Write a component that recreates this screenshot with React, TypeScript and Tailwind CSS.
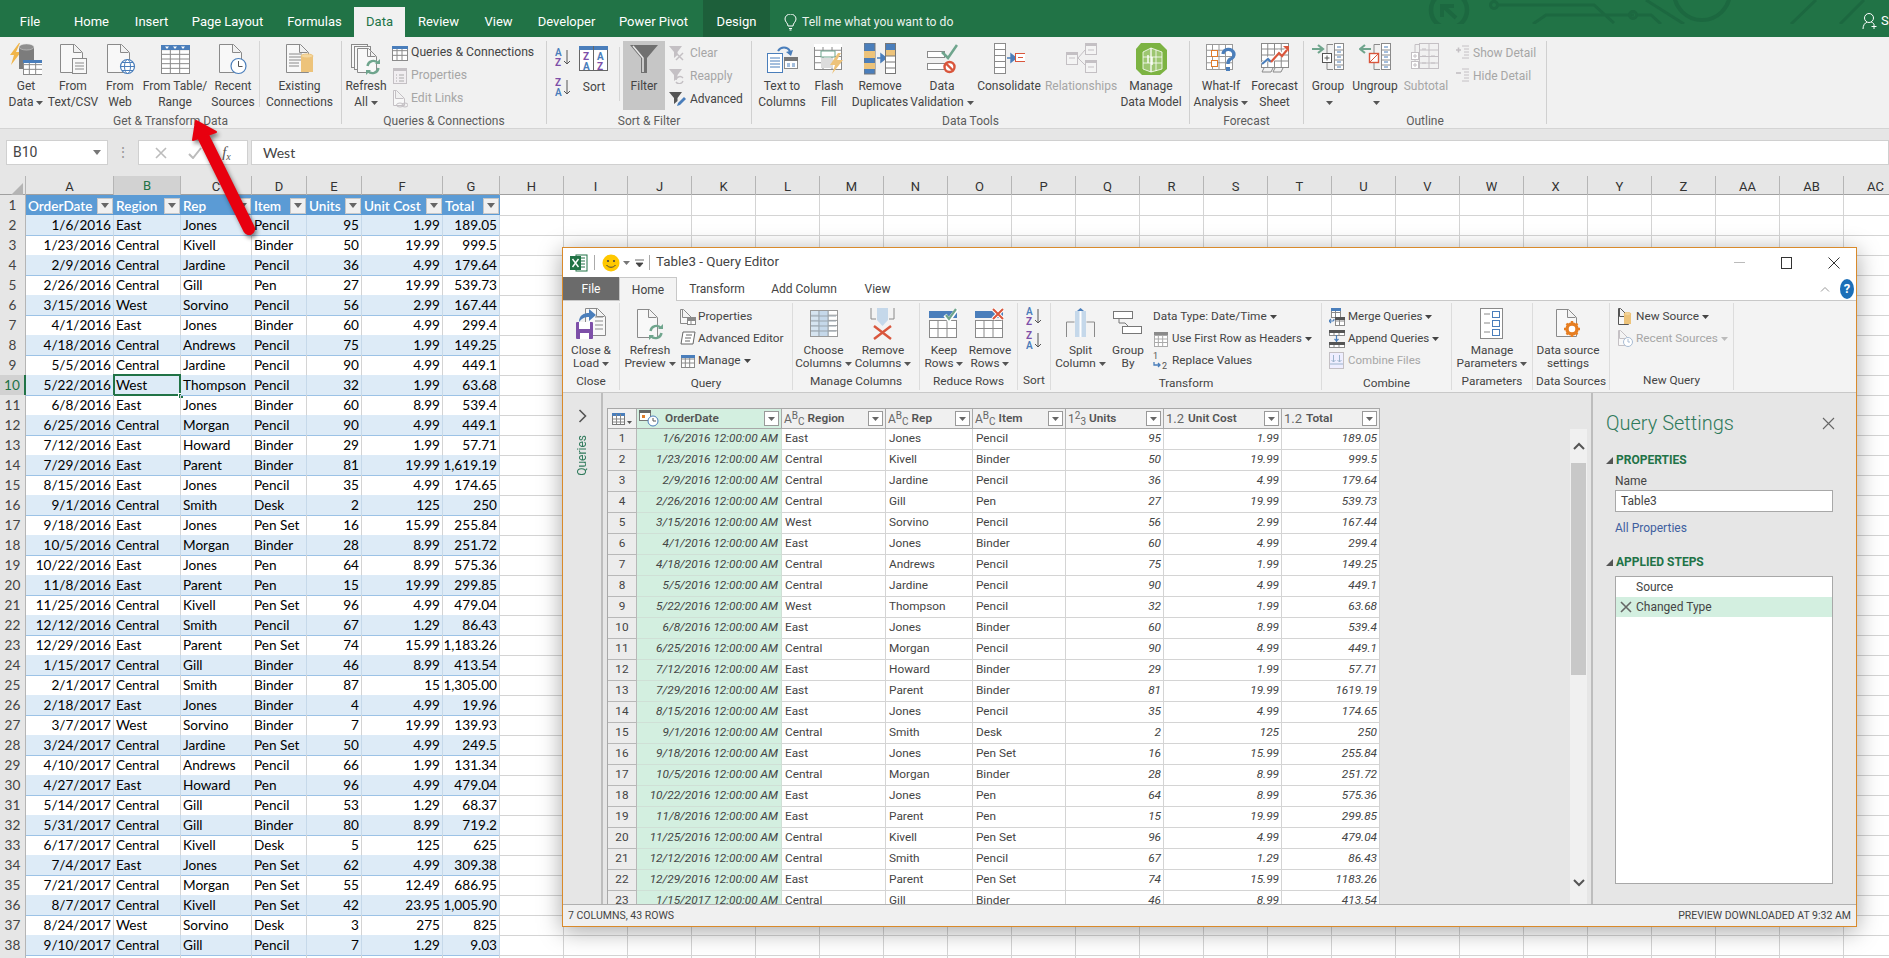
import type { ReactNode } from "react";

const GR = "#8a8a8a";
const DIS = "#c4c0c4";
const BL = "#4a7ebb";
const OR = "#edc37a";
const RD = "#d9563c";
const TL = "#6fa58d";
const PU = "#7d4fa8";

const rows: string[][] = [
  ["1/6/2016", "East", "Jones", "Pencil", "95", "1.99", "189.05"],
  ["1/23/2016", "Central", "Kivell", "Binder", "50", "19.99", "999.5"],
  ["2/9/2016", "Central", "Jardine", "Pencil", "36", "4.99", "179.64"],
  ["2/26/2016", "Central", "Gill", "Pen", "27", "19.99", "539.73"],
  ["3/15/2016", "West", "Sorvino", "Pencil", "56", "2.99", "167.44"],
  ["4/1/2016", "East", "Jones", "Binder", "60", "4.99", "299.4"],
  ["4/18/2016", "Central", "Andrews", "Pencil", "75", "1.99", "149.25"],
  ["5/5/2016", "Central", "Jardine", "Pencil", "90", "4.99", "449.1"],
  ["5/22/2016", "West", "Thompson", "Pencil", "32", "1.99", "63.68"],
  ["6/8/2016", "East", "Jones", "Binder", "60", "8.99", "539.4"],
  ["6/25/2016", "Central", "Morgan", "Pencil", "90", "4.99", "449.1"],
  ["7/12/2016", "East", "Howard", "Binder", "29", "1.99", "57.71"],
  ["7/29/2016", "East", "Parent", "Binder", "81", "19.99", "1,619.19"],
  ["8/15/2016", "East", "Jones", "Pencil", "35", "4.99", "174.65"],
  ["9/1/2016", "Central", "Smith", "Desk", "2", "125", "250"],
  ["9/18/2016", "East", "Jones", "Pen Set", "16", "15.99", "255.84"],
  ["10/5/2016", "Central", "Morgan", "Binder", "28", "8.99", "251.72"],
  ["10/22/2016", "East", "Jones", "Pen", "64", "8.99", "575.36"],
  ["11/8/2016", "East", "Parent", "Pen", "15", "19.99", "299.85"],
  ["11/25/2016", "Central", "Kivell", "Pen Set", "96", "4.99", "479.04"],
  ["12/12/2016", "Central", "Smith", "Pencil", "67", "1.29", "86.43"],
  ["12/29/2016", "East", "Parent", "Pen Set", "74", "15.99", "1,183.26"],
  ["1/15/2017", "Central", "Gill", "Binder", "46", "8.99", "413.54"],
  ["2/1/2017", "Central", "Smith", "Binder", "87", "15", "1,305.00"],
  ["2/18/2017", "East", "Jones", "Binder", "4", "4.99", "19.96"],
  ["3/7/2017", "West", "Sorvino", "Binder", "7", "19.99", "139.93"],
  ["3/24/2017", "Central", "Jardine", "Pen Set", "50", "4.99", "249.5"],
  ["4/10/2017", "Central", "Andrews", "Pencil", "66", "1.99", "131.34"],
  ["4/27/2017", "East", "Howard", "Pen", "96", "4.99", "479.04"],
  ["5/14/2017", "Central", "Gill", "Pencil", "53", "1.29", "68.37"],
  ["5/31/2017", "Central", "Gill", "Binder", "80", "8.99", "719.2"],
  ["6/17/2017", "Central", "Kivell", "Desk", "5", "125", "625"],
  ["7/4/2017", "East", "Jones", "Pen Set", "62", "4.99", "309.38"],
  ["7/21/2017", "Central", "Morgan", "Pen Set", "55", "12.49", "686.95"],
  ["8/7/2017", "Central", "Kivell", "Pen Set", "42", "23.95", "1,005.90"],
  ["8/24/2017", "West", "Sorvino", "Desk", "3", "275", "825"],
  ["9/10/2017", "Central", "Gill", "Pencil", "7", "1.29", "9.03"],
];

const sheetHeads = ["OrderDate", "Region", "Rep", "Item", "Units", "Unit Cost", "Total"];
const colLetters = "A B C D E F G H I J K L M N O P Q R S T U V W X Y Z AA AB AC".split(" ");
const rightAligned = [true, false, false, false, true, true, true];
const SHEET_COLS = "grid grid-cols-[26px_88px_67px_71px_55px_55px_81px_57px_repeat(22,64px)]";
const QE_COLS = "grid grid-cols-[29px_145px_104px_87px_93px_98px_118px_98px]";

function Ico({ w = 32, h = 32, children }: { w?: number; h?: number; children: ReactNode }) {
  return (
    <svg width={w} height={h} viewBox={`0 0 ${w} ${h}`} fill="none" className="shrink-0">
      {children}
    </svg>
  );
}

const Caret = ({ color = "#555" }: { color?: string }) => (
  <svg width="7" height="4" viewBox="0 0 7 4" className="inline-block ml-[3px] align-middle">
    <path d="M0 0h7L3.5 4z" fill={color} />
  </svg>
);

// folded page outline used by lots of the ribbon icons
const Doc = ({ x = 0, y = 0, w = 22, h = 28, c = GR }: { x?: number; y?: number; w?: number; h?: number; c?: string }) => (
  <path
    d={`M${x + 0.5} ${y + 0.5}h${w - 8}l8 8v${h - 8}h-${w}zM${x + w - 8.5} ${y + 0.5}v8h8`}
    fill="#f8f8f8"
    stroke={c}
  />
);

const MiniTable = ({ x, y, w, h, c = GR, cols = 3, rws = 3, top = BL }: { x: number; y: number; w: number; h: number; c?: string; cols?: number; rws?: number; top?: string }) => {
  const lines = [];
  for (let i = 1; i < cols; i++) {
    const px = x + (w * i) / cols;
    lines.push(<path key={"c" + i} d={`M${px} ${y}v${h}`} stroke={c} />);
  }
  for (let i = 1; i < rws; i++) {
    const py = y + (h * i) / rws;
    lines.push(<path key={"r" + i} d={`M${x} ${py}h${w}`} stroke={c} />);
  }
  return (
    <g>
      <rect x={x + 0.5} y={y + 0.5} width={w} height={h} fill="#fff" stroke={c} />
      {lines}
      <rect x={x} y={y} width={w + 1} height={3} fill={top} />
    </g>
  );
};

const Arrows = ({ x, y, c = TL }: { x: number; y: number; c?: string }) => (
  <g transform={`translate(${x} ${y})`} stroke={c} strokeWidth="2.4" fill="none">
    <path d="M1.5 6A6 6 0 0 1 12 3" />
    <path d="M12.5 8A6 6 0 0 1 2 11" />
    <path d="M9 4h5V-1z" fill={c} stroke="none" />
    <path d="M5 10H0v5z" fill={c} stroke="none" />
  </g>
);

const Funnel = ({ c }: { c: string }) => <path d="M1 1h13L9.5 7v3L6 13V7z" fill={c} />;

const AZ = ({ a, b }: { a: string; b: string }) => (
  <svg width="16" height="20" viewBox="0 0 16 20">
    <text x="0" y="9" fontSize="10" fontWeight="600" fontFamily="Roboto,sans-serif" fill={a === "A" ? BL : PU}>{a}</text>
    <text x="0" y="19" fontSize="10" fontWeight="600" fontFamily="Roboto,sans-serif" fill={b === "A" ? BL : PU}>{b}</text>
    <path d="M12 3v14M9 14l3 3 3-3" stroke="#555" fill="none" />
  </svg>
);

const icons: Record<string, ReactNode> = {
  getData: (
    <Ico>
      <path d="M9 0 0 12h4L1 22l10-13H6l4-9z" fill="#f0b54a" />
      <rect x="9" y="4" width="15" height="22" fill="#7c7c7c" />
      <ellipse cx="16.5" cy="4" rx="7.5" ry="3" fill="#8f8f8f" stroke="#ddd" strokeWidth=".5" />
      <MiniTable x={13} y={17} w={19} h={14} />
    </Ico>
  ),
  fromText: (
    <Ico>
      <Doc x={3} y={1} />
      <rect x="15.5" y="15.5" width="14" height="15" fill="#f8f8f8" stroke={GR} />
      <path d="M18 20h9M18 23h9M18 26h9" stroke={GR} />
    </Ico>
  ),
  fromWeb: (
    <Ico>
      <Doc x={3} y={1} />
      <circle cx="23.5" cy="23.5" r="7" fill="#fff" stroke={BL} strokeWidth="1.2" />
      <ellipse cx="23.5" cy="23.5" rx="3" ry="7" stroke={BL} />
      <path d="M16.5 23.5h14M18 19.5h11M18 27.5h11" stroke={BL} />
    </Ico>
  ),
  fromTable: (
    <Ico>
      <MiniTable x={2} y={2} w={28} h={28} cols={3} rws={6} />
      <rect x="2" y="2" width="29" height="5" fill={BL} />
      <path d="M6 3.5h4L8 6zM14 3.5h4L16 6zM22 3.5h4L24 6z" fill="#fff" />
    </Ico>
  ),
  recent: (
    <Ico>
      <Doc x={2} y={1} />
      <circle cx="21.5" cy="23" r="7.5" fill="#fff" stroke={BL} strokeWidth="1.2" />
      <path d="M21.5 18v5.5h4" stroke="#555" />
    </Ico>
  ),
  existing: (
    <Ico>
      <Doc x={2} y={1} />
      <path d="M5 11h13M5 14h13M5 17h13M5 20h10M5 23h10" stroke={GR} />
      <rect x="17" y="13" width="12" height="16" fill={OR} />
      <ellipse cx="23" cy="13" rx="6" ry="2" fill="#f4d79f" stroke={OR} />
    </Ico>
  ),
  refresh: (
    <Ico>
      <rect x="1.5" y="1.5" width="16" height="23" fill="#f8f8f8" stroke={GR} />
      <rect x="4.5" y="3.5" width="16" height="23" fill="#f8f8f8" stroke={GR} />
      <Doc x={7} y={5} w={19} h={24} />
      <Arrows x={16} y={17} />
    </Ico>
  ),
  textCols: (
    <Ico>
      <path d="M12 8a7 7 0 0 1 12 0" stroke={BL} strokeWidth="2" />
      <path d="M20 9l5 4 2-6z" fill={BL} />
      <rect x="1.5" y="10.5" width="15" height="19" fill="#fff" stroke={BL} />
      <path d="M4 15h10M4 18h10M4 21h10M4 24h10" stroke={BL} />
      <rect x="18.5" y="14.5" width="13" height="11" fill="#fff" stroke={GR} />
      <rect x="18" y="14" width="14" height="4" fill="#777" />
      <path d="M21 21h3M26 21h3M21 23h3M26 23h3" stroke={BL} />
    </Ico>
  ),
  flash: (
    <Ico>
      <MiniTable x={1} y={1} w={27} h={25} cols={3} rws={4} top="#fff" />
      <rect x="8" y="8" width="14" height="6" fill="#fff" stroke={TL} />
      <rect x="8" y="15" width="12" height="10" fill="#dcdcdc" />
      <path d="M25 10 17 22h5l-3 9 11-14h-6l4-7z" fill={OR} />
    </Ico>
  ),
  dups: (
    <Ico>
      <rect x="0" y="0" width="11" height="31" fill={BL} stroke="#777" />
      <rect x="0" y="8" width="11" height="7" fill={OR} />
      <rect x="0" y="20" width="11" height="6" fill={OR} />
      <path d="M13 15h7M17 11l5 4-5 4z" stroke={BL} fill={BL} strokeWidth="1.5" />
      <rect x="21.5" y=".5" width="10" height="30" fill="#fff" stroke="#777" />
      <rect x="22" y="1" width="9" height="6" fill={BL} />
      <rect x="22" y="7" width="9" height="6" fill={OR} />
      <path d="M22 13h9M22 19h9M22 25h9" stroke="#777" />
    </Ico>
  ),
  validation: (
    <Ico>
      <rect x="1.5" y="8.5" width="17" height="6" fill="#fff" stroke={GR} />
      <rect x="1.5" y="20.5" width="17" height="6" fill="#fff" stroke={GR} />
      <path d="M16 9l6 6L31 2" stroke={TL} strokeWidth="2.6" />
      <circle cx="23.5" cy="24" r="5" fill="#fff" stroke={RD} strokeWidth="2.4" />
      <path d="M20 20.5l7 7" stroke={RD} strokeWidth="2.4" />
    </Ico>
  ),
  consolidate: (
    <Ico>
      <rect x="1.5" y=".5" width="11" height="30" fill="#fff" stroke={GR} />
      <path d="M2 6.5h10M2 12.5h10M2 18.5h10M2 24.5h10" stroke={GR} />
      <path d="M14 15h7M18 11l5 4-5 4z" stroke={BL} fill={BL} strokeWidth="1.4" />
      <rect x="22.5" y="10.5" width="10" height="8" fill="#fff" stroke={RD} />
      <path d="M25 14.5h5" stroke={RD} />
    </Ico>
  ),
  relationships: (
    <Ico>
      <rect x="1.5" y="9.5" width="11" height="12" fill="#f4f4f4" stroke={DIS} />
      <rect x="1" y="9" width="12" height="3" fill={DIS} />
      <rect x="20.5" y=".5" width="11" height="11" fill="#f4f4f4" stroke={DIS} />
      <rect x="20" y="0" width="12" height="3" fill={DIS} />
      <rect x="20.5" y="17.5" width="11" height="12" fill="#f4f4f4" stroke={DIS} />
      <rect x="20" y="17" width="12" height="3" fill={DIS} />
      <path d="M13 15 20 7M13 15l7 7M4 15h6M23 7h6M23 24h6" stroke={DIS} />
    </Ico>
  ),
  dataModel: (
    <Ico>
      <path d="M6 0h19l7 7v19l-7 6H7l-6-6V6z" fill="#7cb342" />
      <path d="M8 9l8-4v24l-8-3zM16 5l11 4v17l-11 3z" fill="#fff" fillOpacity=".25" stroke="#fff" strokeWidth=".8" />
      <path d="M8 14h19M8 20h19M21 7v21" stroke="#fff" strokeWidth=".8" />
      <path d="M13 12v8M17 14v8" stroke="#fff" strokeWidth="1.4" />
    </Ico>
  ),
  whatIf: (
    <Ico>
      <MiniTable x={1} y={1} w={26} h={25} cols={4} rws={4} top="#ffffff00" c="#999" />
      <rect x="6.5" y="7.5" width="6" height="6" fill="#fff" stroke="#e07b2a" />
      <rect x="6.5" y="17.5" width="6" height="6" fill="#fff" stroke="#e07b2a" />
      <path d="M18 11a5.5 5 0 1 1 7.5 5c-2 1-2.5 2-2.5 5" stroke={BL} strokeWidth="3.4" />
      <rect x="21" y="24" width="4" height="4" fill={BL} />
    </Ico>
  ),
  forecast: (
    <Ico>
      <MiniTable x={2} y={0} w={27} h={24} cols={4} rws={4} top="#ffffff00" />
      <path d="M3 21l7-6 3 3 7-9 3 3 6-7" stroke="#fff" strokeWidth="3.5" />
      <path d="M3 21l6-5 3 3" stroke={BL} strokeWidth="2.2" />
      <path d="M12 19l8-9 3 3 5-6" stroke={RD} strokeWidth="2.2" />
      <path d="M24 3h6v6z" fill={RD} />
      <path d="M5 25l-2 4h9l2-4M16 25l-2 4h8l2-4" stroke={GR} />
    </Ico>
  ),
  group: (
    <Ico>
      <path d="M0 6h10M6 2l5 4-5 4" stroke={TL} strokeWidth="2.2" />
      <path d="M21 1.5h-6v25h6" stroke={GR} />
      <rect x="10.5" y="10.5" width="9" height="9" fill="#fff" stroke="#555" />
      <path d="M12.5 15h5M15 12.5v5" stroke="#555" />
      <rect x="22.5" y=".5" width="9" height="26" fill="#fff" stroke={GR} />
      <path d="M25 4h4M25 9h4M25 14h4M25 19h4M25 24h4" stroke={BL} />
      <path d="M23 7h8M23 12h8M23 17h8M23 22h8" stroke={GR} />
    </Ico>
  ),
  ungroup: (
    <Ico>
      <path d="M12 6H2M6 2 1 6l5 4" stroke={TL} strokeWidth="2.2" />
      <path d="M21 1.5h-6v25h6" stroke={GR} />
      <rect x="10.5" y="10.5" width="9" height="9" fill="#fff" stroke={RD} strokeWidth="1.4" />
      <path d="M11 19l8-8" stroke={RD} />
      <rect x="22.5" y=".5" width="9" height="26" fill="#fff" stroke={GR} />
      <path d="M25 4h4M25 9h4M25 14h4M25 19h4M25 24h4" stroke={BL} />
      <path d="M23 7h8M23 12h8M23 17h8M23 22h8" stroke={GR} />
    </Ico>
  ),
  subtotal: (
    <Ico>
      <path d="M9 1.5H5v8M9 15H5v10h4" stroke={DIS} />
      <rect x="1.5" y="9.5" width="7" height="7" fill="#fff" stroke={DIS} />
      <rect x="1.5" y="18.5" width="7" height="7" fill="#fff" stroke={DIS} />
      <path d="M3 13h4M5 11v4M3 22h4M5 20v4M12 6h4M12 13h4M12 20h4M21 13h4M21 20h4" stroke={DIS} />
      <rect x="9.5" y=".5" width="19" height="25" stroke={DIS} />
      <path d="M10 7h18M10 13.5h18M10 20h18M19 1v25" stroke={DIS} />
    </Ico>
  ),
  // query editor
  closeLoad: (
    <Ico>
      <Doc x={10} y={0} w={20} h={27} />
      <path d="M20 9h8M20 13h8M20 17h8M20 21h8" stroke={GR} />
      <path d="M4 14C4 7 9 5 14 5V1l7 6-7 6V9c-4 0-7 1-10 5z" fill={BL} />
      <rect x="1" y="14" width="17" height="17" rx="1" fill={PU} />
      <rect x="4" y="14" width="11" height="7" fill="#fff" />
      <rect x="5" y="25" width="9" height="6" fill="#fff" />
    </Ico>
  ),
  refreshPrev: (
    <Ico>
      <Doc x={3} y={1} w={20} h={28} />
      <Arrows x={15} y={17} />
    </Ico>
  ),
  choose: (
    <Ico>
      <MiniTable x={2} y={2} w={27} h={26} cols={3} rws={5} top="#ffffff00" c="#999" />
      <rect x="3" y="3" width="8" height="25" fill="#c5d8ea" fillOpacity=".7" />
      <rect x="11" y="3" width="9" height="25" fill="#c5d8ea" />
      <path d="M11 3v25M20 3v25M3 8h25M3 13h25M3 18h25M3 23h25" stroke="#9aa5ae" />
    </Ico>
  ),
  removeCols: (
    <Ico>
      <path d="M4 0v11h5M27 0v11h-5" stroke={GR} />
      <path d="M10 0h11v12l-5.5 6L10 12z" fill="#c5d8ea" />
      <path d="M7 18l17 13M24 18 7 31" stroke={RD} strokeWidth="2.4" />
    </Ico>
  ),
  keep: (
    <Ico>
      <rect x="1" y="3" width="28" height="7" fill={BL} />
      <MiniTable x={1} y={12} w={27} h={17} cols={3} rws={2} top="#ffffff00" />
      <path d="M17 7l4 5 8-11" stroke="#fff" strokeWidth="4" />
      <path d="M18 7l3 4 7-10" stroke={TL} strokeWidth="2.2" />
    </Ico>
  ),
  removeRows: (
    <Ico>
      <rect x="1" y="3" width="28" height="7" fill={BL} />
      <MiniTable x={1} y={12} w={27} h={17} cols={3} rws={2} top="#ffffff00" />
      <path d="M19 1l10 10M29 1 19 11" stroke="#fff" strokeWidth="4" />
      <path d="M19 1l10 10M29 1 19 11" stroke={RD} strokeWidth="2" />
    </Ico>
  ),
  split: (
    <Ico>
      <path d="M1.5 29V14h8M29.5 29V14h-8" stroke={GR} />
      <rect x="10" y="3" width="11" height="26" fill="#c5d8ea" />
      <path d="M15.5 3v26" stroke="#fff" strokeWidth="2" />
      <path d="M12 3h7l-3.5-3z" fill={BL} />
    </Ico>
  ),
  groupBy: (
    <Ico>
      <rect x="1.5" y="3.5" width="19" height="7" fill="#fff" stroke="#777" />
      <rect x="10.5" y="18.5" width="19" height="7" fill="#fff" stroke="#777" />
      <path d="M7 11v4h6l3 3" stroke="#777" />
    </Ico>
  ),
  manageParams: (
    <Ico>
      <rect x="4.5" y=".5" width="22" height="30" fill="#fff" stroke={GR} />
      <rect x="16.5" y="3.5" width="7" height="6" stroke={BL} />
      <rect x="16.5" y="12.5" width="7" height="6" stroke={BL} />
      <rect x="16.5" y="21.5" width="7" height="6" stroke={BL} />
      <path d="M8 6h6M8 15h6M8 24h6" stroke={GR} />
    </Ico>
  ),
  dataSource: (
    <Ico>
      <Doc x={4} y={1} w={20} h={27} />
      <circle cx="20" cy="21" r="5" stroke="#e67e22" strokeWidth="3.4" fill="#fff" />
      <path d="M20 13v3M20 26v3M12 21h3M25 21h3M14.5 15.5l2 2M23.5 24.5l2 2M25.5 15.5l-2 2M16.5 24.5l-2 2" stroke="#e67e22" strokeWidth="2.4" />
    </Ico>
  ),
};

const small: Record<string, ReactNode> = {
  queries: (
    <Ico w={16} h={16}>
      <MiniTable x={0} y={1} w={15} h={14} cols={3} rws={3} />
    </Ico>
  ),
  props: (
    <Ico w={16} h={18}>
      <rect x="1.5" y="1.5" width="13" height="15" fill="#f1eef1" stroke={DIS} />
      <rect x="1" y="1" width="14" height="3" fill={DIS} />
      <path d="M4 8h1M7 8h5M4 11h1M7 11h5M4 14h1M7 14h5" stroke="#aaa" />
    </Ico>
  ),
  links: (
    <Ico w={16} h={18}>
      <Doc x={1} y={0} w={11} h={15} c={DIS} />
      <ellipse cx="8" cy="15" rx="3.5" ry="2" stroke={DIS} />
      <ellipse cx="13" cy="15" rx="3" ry="2" stroke={DIS} />
    </Ico>
  ),
  clear: (
    <Ico w={18} h={16}>
      <Funnel c={DIS} />
      <path d="M8 8l7 7M15 8l-7 7" stroke={DIS} strokeWidth="1.5" />
    </Ico>
  ),
  reapply: (
    <Ico w={18} h={16}>
      <Funnel c={DIS} />
      <path d="M8 12a4 4 0 0 1 7-2M15 13a4 4 0 0 1-7 1" stroke={DIS} strokeWidth="1.4" />
    </Ico>
  ),
  advanced: (
    <Ico w={18} h={16}>
      <Funnel c="#555" />
      <path d="M9 15l1-3 6-6 2 2-6 6z" fill={BL} />
    </Ico>
  ),
  show: (
    <Ico w={15} h={15}>
      <path d="M1 5h5M3.5 2.5v5" stroke={DIS} strokeWidth="1.6" />
      <path d="M7 1h7M9 4h5M9 7h5M9 10h5M7 13h7" stroke={DIS} />
    </Ico>
  ),
  hide: (
    <Ico w={15} h={15}>
      <path d="M1 5h5" stroke={DIS} strokeWidth="1.6" />
      <path d="M7 1h7M9 4h5M9 7h5M9 10h5M7 13h7" stroke={DIS} />
    </Ico>
  ),
  qProps: (
    <Ico w={16} h={16}>
      <Doc x={0} y={0} w={11} h={14} />
      <MiniTable x={7} y={8} w={8} h={7} cols={2} rws={2} top={GR} />
    </Ico>
  ),
  adv: (
    <Ico w={16} h={16}>
      <path d="M3 1h12l-2 12H1z" fill="#fff" stroke="#666" />
      <path d="M6 4h6M5 7h6M5 10h5" stroke="#666" />
    </Ico>
  ),
  manage: (
    <Ico w={16} h={16}>
      <MiniTable x={1} y={2} w={13} h={12} cols={3} rws={3} />
    </Ico>
  ),
  firstRow: (
    <Ico w={16} h={16}>
      <MiniTable x={1} y={1} w={13} h={14} cols={3} rws={4} top="#8a8a8a" c="#aaa" />
    </Ico>
  ),
  merge: (
    <Ico w={16} h={18}>
      <MiniTable x={2} y={0} w={9} h={9} cols={2} rws={2} />
      <MiniTable x={6} y={9} w={9} h={8} cols={2} rws={2} top="#555" />
      <path d="M0 13h4c1 0 1-1 1-2M0 13l2-2M0 13l2 2" stroke={BL} strokeWidth="1.2" />
    </Ico>
  ),
  append: (
    <Ico w={16} h={18}>
      <MiniTable x={0} y={0} w={15} h={5} cols={3} rws={1} top="#555" />
      <MiniTable x={0} y={12} w={15} h={5} cols={3} rws={1} top="#555" />
      <path d="M7.5 5v7M5.5 9l2 2 2-2" stroke={BL} strokeWidth="1.2" />
    </Ico>
  ),
  combine: (
    <Ico w={16} h={18}>
      <rect x=".5" y=".5" width="14" height="16" fill="#eef" stroke={DIS} />
      <path d="M1 12h13M4.5 3v7M2.5 8l2 2 2-2M10.5 3v7M8.5 8l2 2 2-2" stroke="#9db4cc" />
    </Ico>
  ),
  newSource: (
    <Ico w={16} h={18}>
      <Doc x={0} y={0} w={10} h={16} c="#555" />
      <rect x="6" y="6" width="7" height="10" fill={OR} />
      <ellipse cx="9.5" cy="6" rx="3.5" ry="1.4" fill="#f4d79f" stroke={OR} />
    </Ico>
  ),
  recentSrc: (
    <Ico w={16} h={18}>
      <Doc x={0} y={0} w={10} h={15} c={DIS} />
      <circle cx="10" cy="12" r="4.5" fill="#fff" stroke="#a8bcd4" />
      <path d="M10 9v3h2" stroke="#a8bcd4" />
    </Ico>
  ),
  replace: (
    <svg width="14" height="18" viewBox="0 0 14 18">
      <text x="0" y="7" fontSize="9" fontFamily="Roboto,sans-serif" fill="#555">1</text>
      <text x="9" y="17" fontSize="9" fontFamily="Roboto,sans-serif" fill="#555">2</text>
      <path d="M1 10v3h6M5 11l2 2-2 2" stroke={BL} fill="none" strokeWidth="1.3" />
    </svg>
  ),
};

function Big({ w, icon, l1, l2, caret, off }: { w: number; icon: ReactNode; l1: string; l2?: string; caret?: boolean; off?: boolean }) {
  return (
    <div
      style={{ width: w }}
      className={`shrink-0 flex flex-col items-center pt-[2px] leading-[16px] whitespace-nowrap ${off ? "text-[#a6a6a6]" : "text-[#444]"}`}
    >
      <div className="h-[32px] flex items-center justify-center mb-[3px]">{icon}</div>
      <div>{l1}</div>
      {(l2 || caret) && (
        <div>
          {l2}
          {caret && <Caret />}
        </div>
      )}
    </div>
  );
}

function Small({ icon, label, off, caret, iconW = 22 }: { icon?: ReactNode; label: string; off?: boolean; caret?: boolean; iconW?: number }) {
  return (
    <div className={`h-[23px] flex items-center whitespace-nowrap ${off ? "text-[#a6a6a6]" : "text-[#444]"}`}>
      {icon && (
        <div style={{ width: iconW }} className="shrink-0">
          {icon}
        </div>
      )}
      {label}
      {caret && <Caret color={off ? "#aaa" : "#444"} />}
    </div>
  );
}

function Group({ w, label, children, last }: { w: number; label: string; children: ReactNode; last?: boolean }) {
  return (
    <div
      style={{ width: w }}
      className={`shrink-0 my-[4px] flex flex-col ${last ? "" : "border-r border-[#d0d0d0]"}`}
    >
      <div className="h-[72px] flex">{children}</div>
      <div className="h-[12px] leading-[18px] text-center text-[#5c5c5c]">{label}</div>
    </div>
  );
}

function TabBar() {
  const before: [string, string][] = [
    ["File", "w-[60px]"],
    ["Home", "w-[63px]"],
    ["Insert", "w-[57px]"],
    ["Page Layout", "w-[95px]"],
    ["Formulas", "w-[79px]"],
  ];
  const after: [string, string][] = [
    ["Review", "w-[67px]"],
    ["View", "w-[53px]"],
    ["Developer", "w-[83px]"],
    ["Power Pivot", "w-[91px]"],
  ];
  return (
    <div className="relative h-[37px] bg-[#217346] flex text-white text-[13px] overflow-hidden shrink-0">
      {before.map(([t, w]) => (
        <div key={t} className={`${w} pt-[7px] flex items-center justify-center`}>{t}</div>
      ))}
      <div className="w-[51px] mt-[7px] bg-[#f1f1f1] text-[#217346] flex items-center justify-center">Data</div>
      {after.map(([t, w]) => (
        <div key={t} className={`${w} pt-[7px] flex items-center justify-center`}>{t}</div>
      ))}
      <div className="w-[4px]" />
      <div className="w-[67px] pt-[7px] bg-[#1d5f3a] flex items-center justify-center">Design</div>
      <div className="ml-[14px] pt-[7px] flex items-center gap-[5px] text-[12.2px] text-[#e8f1ec]">
        <svg width="13" height="17" viewBox="0 0 13 17" fill="none" stroke="#fff">
          <path d="M4 12c0-3-3-4-3-7a5.5 5 0 0 1 11 0c0 3-3 4-3 7zM5 14.5h3M5.5 16h2" />
        </svg>
        Tell me what you want to do
      </div>
      {/* circuit board art behind the title bar */}
      <svg className="absolute left-[1420px] top-0" width="469" height="24" viewBox="0 0 469 24" fill="none" stroke="#1c6840" strokeWidth="3">
        <circle cx="29" cy="10" r="18" strokeWidth="4.5" />
        <path d="M36 18 24 7M22 17V6h12" strokeWidth="4" />
        <circle cx="74" cy="5" r="3.5" />
        <path d="M78 5h96l20 18M113 24l13-9h88M217 15h14l10 9" />
        <circle cx="213" cy="15" r="3.5" />
        <path d="M226 0l38 24" />
        <circle cx="282" cy="-8" r="28" strokeWidth="4" />
        <path d="M371 24 396 0M420 24 444 0" />
      </svg>
      <div className="absolute left-[1862px] top-[11px] flex items-center gap-[3px]">
        <svg width="16" height="18" viewBox="0 0 16 18" fill="none" stroke="#fff">
          <circle cx="7" cy="6" r="4.5" />
          <path d="M1 17c0-4 2-6 4-7M9 10c1 0 2 1 3 2M12 12v5M9.5 14.5h5" />
        </svg>
        <span>Share</span>
      </div>
    </div>
  );
}

function Ribbon() {
  return (
    <div className="h-[92px] shrink-0 bg-[#f1f1f1] border-b border-[#d4d4d4] flex text-[12px] font-[Roboto,sans-serif] overflow-hidden">
      <Group w={342} label="Get & Transform Data">
        <div className="w-[3px]" />
        <Big w={46} icon={icons.getData} l1="Get" l2="Data" caret />
        <Big w={48} icon={icons.fromText} l1="From" l2="Text/CSV" />
        <Big w={46} icon={icons.fromWeb} l1="From" l2="Web" />
        <Big w={64} icon={icons.fromTable} l1="From Table/" l2="Range" />
        <Big w={52} icon={icons.recent} l1="Recent" l2="Sources" />
        <div className="w-[1px] h-[66px] bg-[#d6d6d6]" />
        <Big w={79} icon={icons.existing} l1="Existing" l2="Connections" />
      </Group>
      <Group w={205} label="Queries & Connections">
        <Big w={48} icon={icons.refresh} l1="Refresh" l2="All" caret />
        <div className="pl-[2px] text-[12.2px]">
          <Small icon={small.queries} iconW={19} label="Queries & Connections" />
          <Small icon={small.props} iconW={19} label="Properties" off />
          <Small icon={small.links} iconW={19} label="Edit Links" off />
        </div>
      </Group>
      <Group w={205} label="Sort & Filter">
        <div className="w-[29px] flex flex-col items-center gap-[10px] pt-[6px] pl-[2px]">
          <AZ a="A" b="Z" />
          <AZ a="Z" b="A" />
        </div>
        <div className="w-[36px] flex flex-col items-center pt-[5px] leading-[16px] text-[#444]">
          <svg width="30" height="26" viewBox="0 0 30 26" className="mb-[6px]">
            <rect x=".5" y=".5" width="28" height="24" fill="#fff" stroke="#666" />
            <rect x="0" y="0" width="29" height="4" fill={BL} />
            <path d="M14.5 0v25" stroke="#666" />
            <text x="4" y="14" fontSize="10" fontWeight="700" fontFamily="Roboto,sans-serif" fill={PU}>Z</text>
            <text x="4" y="24" fontSize="10" fontWeight="700" fontFamily="Roboto,sans-serif" fill={BL}>A</text>
            <text x="18" y="14" fontSize="10" fontWeight="700" fontFamily="Roboto,sans-serif" fill={BL}>A</text>
            <text x="18" y="24" fontSize="10" fontWeight="700" fontFamily="Roboto,sans-serif" fill={PU}>Z</text>
          </svg>
          <div className="mt-[1px]">Sort</div>
        </div>
        <div className="w-[7px]" />
        <div className="w-[1px] h-[54px] mt-[6px] bg-[#d6d6d6]" />
        <div className="w-[3px]" />
        <div className="w-[42px] h-[69px] bg-[#c6c6c6] flex flex-col items-center pt-[4px] text-[#444]">
          <svg width="28" height="28" viewBox="0 0 28 28">
            <path d="M0 0h28L17 13v15h-6V13z" fill="#707070" />
            <path d="M3 1l10 12v14" stroke="#e8e8e8" fill="none" strokeWidth="1.5" />
          </svg>
          <div className="mt-[5px] leading-[16px]">Filter</div>
        </div>
        <div className="pl-[3px]">
          <Small icon={small.clear} label="Clear" off />
          <Small icon={small.reapply} label="Reapply" off />
          <Small icon={small.advanced} label="Advanced" />
        </div>
      </Group>
      <Group w={438} label="Data Tools">
        <Big w={60} icon={icons.textCols} l1="Text to" l2="Columns" />
        <Big w={34} icon={icons.flash} l1="Flash" l2="Fill" />
        <Big w={68} icon={icons.dups} l1="Remove" l2="Duplicates" />
        <Big w={56} icon={icons.validation} l1="Data" l2="Validation" caret />
        <Big w={78} icon={icons.consolidate} l1="Consolidate" />
        <Big w={66} icon={icons.relationships} l1="Relationships" off />
        <Big w={74} icon={icons.dataModel} l1="Manage" l2="Data Model" />
      </Group>
      <Group w={114} label="Forecast">
        <Big w={62} icon={icons.whatIf} l1="What-If" l2="Analysis" caret />
        <Big w={45} icon={icons.forecast} l1="Forecast" l2="Sheet" />
      </Group>
      <Group w={243} label="Outline">
        <Big w={48} icon={icons.group} l1="Group" caret />
        <Big w={46} icon={icons.ungroup} l1="Ungroup" caret />
        <Big w={56} icon={icons.subtotal} l1="Subtotal" off />
        <div className="pl-[1px]">
          <Small icon={small.show} iconW={18} label="Show Detail" off />
          <Small icon={small.hide} iconW={18} label="Hide Detail" off />
        </div>
      </Group>
    </div>
  );
}

function FormulaBar() {
  return (
    <div className="h-[47px] shrink-0 bg-[#e6e6e6] pt-[11px] flex text-[14px] font-[Roboto,sans-serif] text-[#444]">
      <div className="ml-[6px] w-[102px] h-[25px] bg-white border border-[#d0d0d0] flex items-center justify-between px-[6px]">
        B10
        <svg width="8" height="5" viewBox="0 0 8 5"><path d="M0 0h8L4 5z" fill="#777" /></svg>
      </div>
      <div className="w-[30px] flex justify-center items-center h-[25px] text-[#999]">⋮</div>
      <div className="w-[110px] h-[25px] bg-white border border-[#d0d0d0] flex items-center justify-around px-[6px] text-[#bbb]">
        <svg width="12" height="12" viewBox="0 0 12 12" stroke="#bcbcbc" strokeWidth="1.6"><path d="M1 1l10 10M11 1 1 11" /></svg>
        <svg width="14" height="12" viewBox="0 0 14 12" fill="none" stroke="#bcbcbc" strokeWidth="2"><path d="M1 7l4 4 8-10" /></svg>
        <span className="font-['Liberation_Serif',serif] italic text-[15px] text-[#555]">f<sub className="text-[10px]">x</sub></span>
      </div>
      <div className="ml-[3px] flex-1 h-[25px] bg-white border border-[#d0d0d0] flex items-center pl-[11px] text-[14px] font-[Lato,sans-serif]">
        West
      </div>
    </div>
  );
}

function FilterBtn() {
  return (
    <span className="shrink-0 w-[16px] h-[16px] bg-[#f0f0f0] border border-[#c8c8c8] flex items-center justify-center">
      <svg width="8" height="5" viewBox="0 0 8 5"><path d="M0 0h8L4 5z" fill="#666" /></svg>
    </span>
  );
}

function Sheet() {
  const blanks = Array.from({ length: 22 });
  return (
    <div className="flex-1 overflow-hidden font-[Lato,sans-serif] text-[13.6px] text-black">
      <div className={`${SHEET_COLS} h-[19px] bg-[#e6e6e6] border-b border-[#a0a0a0] text-[#333] font-[Roboto,sans-serif] text-[13px]`}>
        <div className="border-r border-[#b5b5b5] flex items-end justify-end pr-[2px] pb-[2px]">
          <svg width="13" height="13" viewBox="0 0 13 13"><path d="M13 0v13H0z" fill="#b4b4b4" /></svg>
        </div>
        {colLetters.map((c) => (
          <div
            key={c}
            className={`flex items-center justify-center border-r border-[#b5b5b5] ${c === "B" ? "bg-[#d2d2d2] text-[#217346] border-b-2 border-b-[#217346]" : ""}`}
          >
            {c}
          </div>
        ))}
      </div>
      <div className={`${SHEET_COLS} h-[20px]`}>
        <div className="bg-[#e6e6e6] border-r border-b border-[#b5b5b5] flex items-center justify-center text-[#444]">1</div>
        {sheetHeads.map((h) => (
          <div key={h} className="bg-[#5b9bd5] text-white font-semibold flex items-center justify-between pl-[2px] pr-[1px] whitespace-nowrap">
            {h}
            <FilterBtn />
          </div>
        ))}
        {blanks.map((_, i) => (
          <div key={i} className="border-r border-b border-[#d4d4d4]" />
        ))}
      </div>
      {[...rows, null].map((r, idx) => {
        const n = idx + 2;
        const band = n % 2 === 0 && r !== null;
        const active = n === 10;
        return (
          <div key={n} className={`${SHEET_COLS} h-[20px]`}>
            <div className={`border-b border-[#b5b5b5] flex items-center justify-center ${active ? "bg-[#d2d2d2] text-[#217346] border-r-2 border-r-[#217346]" : "bg-[#e6e6e6] text-[#444] border-r"}`}>
              {r ? n : ""}
            </div>
            {(r ?? ["", "", "", "", "", "", ""]).map((v, i) => (
              <div
                key={i}
                className={`relative flex items-center whitespace-nowrap px-[2px] border-b border-b-[#9bc2e6] border-r ${band ? "bg-[#ddebf7] border-r-[#c6d9ea]" : "border-r-[#d4d4d4]"} ${rightAligned[i] ? "justify-end" : ""}`}
              >
                {v}
                {active && i === 1 && (
                  <>
                    <span className="absolute inset-[-1px] border-2 border-[#217346]" />
                    <span className="absolute right-[-4px] bottom-[-4px] w-[6px] h-[6px] bg-[#217346] border border-white" />
                  </>
                )}
              </div>
            ))}
            {blanks.map((_, i) => (
              <div key={i} className="border-r border-b border-[#d4d4d4]" />
            ))}
          </div>
        );
      })}
    </div>
  );
}

function QBig({ w, icon, l1, l2, caret }: { w: number; icon: ReactNode; l1: string; l2: string; caret?: boolean }) {
  return (
    <div style={{ width: w }} className="shrink-0 flex flex-col items-center pt-[5px] leading-[13px] text-[#444] whitespace-nowrap">
      <div className="h-[32px] flex items-center justify-center mb-[4px]">{icon}</div>
      <div>{l1}</div>
      <div>
        {l2}
        {caret && <Caret />}
      </div>
    </div>
  );
}

function QSmall({ icon, label, off, caret, iconW = 18 }: { icon?: ReactNode; label: string; off?: boolean; caret?: boolean; iconW?: number }) {
  return (
    <div className={`h-[22px] flex items-center whitespace-nowrap ${off ? "text-[#a6a6a6]" : "text-[#444]"}`}>
      {icon && (
        <div style={{ width: iconW }} className="shrink-0">
          {icon}
        </div>
      )}
      {label}
      {caret && <Caret color={off ? "#bbb" : "#444"} />}
    </div>
  );
}

function QGroup({ w, label, children, last }: { w: number; label: string; children: ReactNode; last?: boolean }) {
  return (
    <div style={{ width: w }} className={`shrink-0 my-[2px] flex flex-col ${last ? "" : "border-r border-[#dcdcdc]"}`}>
      <div className="h-[72px] flex">{children}</div>
      <div className="flex-1 flex items-center justify-center pt-[3px] text-[#444] whitespace-nowrap">{label}</div>
    </div>
  );
}

function QERibbon() {
  return (
    <div className="h-[92px] shrink-0 bg-[#f3f3f3] border-b border-[#c8c8c8] flex text-[11.8px]">
      <QGroup w={57} label="Close">
        <QBig w={56} icon={icons.closeLoad} l1="Close &" l2="Load" caret />
      </QGroup>
      <QGroup w={173} label="Query">
        <QBig w={60} icon={icons.refreshPrev} l1="Refresh" l2="Preview" caret />
        <div className="pt-[3px]">
          <QSmall icon={small.qProps} label="Properties" />
          <QSmall icon={small.adv} label="Advanced Editor" />
          <QSmall icon={small.manage} label="Manage" caret />
        </div>
      </QGroup>
      <QGroup w={127} label="Manage Columns">
        <QBig w={61} icon={icons.choose} l1="Choose" l2="Columns" caret />
        <QBig w={58} icon={icons.removeCols} l1="Remove" l2="Columns" caret />
      </QGroup>
      <QGroup w={98} label="Reduce Rows">
        <QBig w={48} icon={icons.keep} l1="Keep" l2="Rows" caret />
        <QBig w={44} icon={icons.removeRows} l1="Remove" l2="Rows" caret />
      </QGroup>
      <QGroup w={33} label="Sort">
        <div className="w-full flex flex-col items-center gap-[4px] pt-[3px]">
          <AZ a="A" b="Z" />
          <AZ a="Z" b="A" />
        </div>
      </QGroup>
      <QGroup w={271} label="Transform">
        <QBig w={59} icon={icons.split} l1="Split" l2="Column" caret />
        <QBig w={36} icon={icons.groupBy} l1="Group" l2="By" />
        <div className="pl-[7px] pt-[3px]">
          <QSmall label="Data Type: Date/Time" caret />
          <div className="text-[11.4px]">
            <QSmall icon={small.firstRow} iconW={19} label="Use First Row as Headers" caret />
          </div>
          <QSmall icon={small.replace} iconW={19} label="Replace Values" />
        </div>
      </QGroup>
      <QGroup w={130} label="Combine">
        <div className="pl-[7px] pt-[3px] text-[11.5px]">
          <QSmall icon={small.merge} iconW={19} label="Merge Queries" caret />
          <QSmall icon={small.append} iconW={19} label="Append Queries" caret />
          <QSmall icon={small.combine} iconW={19} label="Combine Files" off />
        </div>
      </QGroup>
      <QGroup w={81} label="Parameters">
        <QBig w={80} icon={icons.manageParams} l1="Manage" l2="Parameters" caret />
      </QGroup>
      <QGroup w={77} label="Data Sources">
        <QBig w={70} icon={icons.dataSource} l1="Data source" l2="settings" />
      </QGroup>
      <QGroup w={124} label="New Query">
        <div className="pl-[8px] pt-[3px]">
          <QSmall icon={small.newSource} label="New Source" caret />
          <QSmall icon={small.recentSrc} label="Recent Sources" off caret />
        </div>
      </QGroup>
    </div>
  );
}

const TypeAbc = () => (
  <span className="text-[#666] text-[12px] font-normal leading-none mr-[3px] inline-flex items-center">
    A<span className="relative top-[-3px] text-[10px]">B</span><span className="relative top-[3px] text-[10px]">C</span>
  </span>
);
const Type123 = () => (
  <span className="text-[#666] text-[12px] font-normal leading-none mr-[3px] inline-flex items-center">
    1<span className="relative top-[-3px] text-[10px]">2</span><span className="relative top-[3px] text-[10px]">3</span>
  </span>
);
const TypeDec = () => <span className="text-[#666] text-[13px] font-normal leading-none mr-[4px]">1.2</span>;

function QHead({ type, label, green }: { type: ReactNode; label: string; green?: boolean }) {
  return (
    <div className={`flex items-center justify-between pl-[2px] pr-[2px] border-r border-[#a8a8a8] font-semibold text-[#555] whitespace-nowrap ${green ? "bg-[#d3efe0]" : "bg-[#f0f0f0]"}`}>
      <span className="flex items-center">
        {type}
        {label}
      </span>
      <span className="w-[15px] h-[15px] bg-white border border-[#999] flex items-center justify-center">
        <svg width="7" height="4" viewBox="0 0 7 4"><path d="M0 0h7L3.5 4z" fill="#666" /></svg>
      </span>
    </div>
  );
}

function QueryGrid() {
  const rowsShown = rows.slice(0, 23);
  return (
    <div className="w-[967px] pl-[4px] pt-[15px] overflow-hidden">
      <div className={`${QE_COLS} h-[21px] w-[773px] border border-[#a8a8a8] box-border`}>
        <div className="bg-[#f0f0f0] border-r border-[#a8a8a8] flex items-center justify-center">
          <svg width="20" height="14" viewBox="0 0 20 14">
            <rect x=".5" y="1.5" width="12" height="11" fill="#fff" stroke="#777" />
            <rect x="0" y="1" width="13" height="3" fill={BL} />
            <path d="M4.5 2v10M8.5 2v10M1 7h11M1 10h11" stroke="#888" />
            <path d="M15 9h5l-2.5 3z" fill="#555" />
          </svg>
        </div>
        <QHead
          green
          type={
            <svg width="22" height="17" viewBox="0 0 22 17" className="mr-[4px]">
              <rect x=".5" y=".5" width="11" height="10" fill="#fff" stroke="#777" />
              <rect x="0" y="0" width="12" height="3" fill="#666" />
              <rect x="3" y="5" width="3" height="3" fill="#e07b2a" />
              <circle cx="14" cy="11" r="5" fill="#fff" stroke={BL} />
              <path d="M14 8v3h3" stroke="#555" fill="none" />
            </svg>
          }
          label="OrderDate"
        />
        <QHead type={<TypeAbc />} label="Region" />
        <QHead type={<TypeAbc />} label="Rep" />
        <QHead type={<TypeAbc />} label="Item" />
        <QHead type={<Type123 />} label="Units" />
        <QHead type={<TypeDec />} label="Unit Cost" />
        <QHead type={<TypeDec />} label="Total" />
      </div>
      {rowsShown.map((r, idx) => (
        <div key={idx} className={`${QE_COLS} h-[21px] w-[773px] bg-white border-l border-l-[#a8a8a8] text-[#444]`}>
          <div className="bg-[#ececec] border-r border-b border-[#b8b8b8] flex items-center justify-center">{idx + 1}</div>
          <div className="bg-[#d3efe0] italic border-r border-b border-[#cfe0d6] flex items-center justify-end pr-[3px] whitespace-nowrap">
            {r[0]} 12:00:00 AM
          </div>
          {[1, 2, 3].map((i) => (
            <div key={i} className="border-r border-b border-[#d4d4d4] flex items-center pl-[3px]">{r[i]}</div>
          ))}
          {[4, 5, 6].map((i) => (
            <div key={i} className="border-r border-b border-[#d4d4d4] flex items-center justify-end pr-[2px] italic">
              {r[i].replace(/,/g, "")}
            </div>
          ))}
        </div>
      ))}
    </div>
  );
}

function QuerySettings() {
  return (
    <div className="flex-1 border-l-2 border-[#bdbdbd] pl-[13px] pt-[16px] text-[12px] text-[#444]">
      <div className="flex items-center justify-between w-[229px] h-[28px]">
        <span className="text-[20px] font-light text-[#2f7a5b]">Query Settings</span>
        <svg width="13" height="13" viewBox="0 0 13 13" stroke="#666" strokeWidth="1.1"><path d="M1 1l11 11M12 1 1 12" /></svg>
      </div>
      <div className="mt-[15px] flex items-center h-[16px] font-bold text-[#217346]">
        <svg width="7" height="7" viewBox="0 0 7 7" className="mr-[3px]"><path d="M7 0v7H0z" fill="#555" /></svg>
        PROPERTIES
      </div>
      <div className="ml-[9px]">
        <div className="mt-[5px] h-[16px] flex items-center">Name</div>
        <div className="mt-[1px] w-[218px] h-[22px] bg-white border border-[#a8a8a8] flex items-center pl-[5px]">Table3</div>
        <div className="mt-[8px] h-[16px] flex items-center text-[#3f5f9f]">All Properties</div>
      </div>
      <div className="mt-[18px] flex items-center h-[16px] font-bold text-[#217346]">
        <svg width="7" height="7" viewBox="0 0 7 7" className="mr-[3px]"><path d="M7 0v7H0z" fill="#555" /></svg>
        APPLIED STEPS
      </div>
      <div className="ml-[9px] mt-[6px] w-[218px] h-[308px] bg-white border border-[#a8a8a8]">
        <div className="h-[20px] flex items-center pl-[20px]">Source</div>
        <div className="h-[20px] flex items-center bg-[#d3efe0]">
          <svg width="20" height="12" viewBox="0 0 20 12" stroke="#666" strokeWidth="1.6" className="shrink-0"><path d="M5 1l10 10M15 1 5 11" /></svg>
          Changed Type
        </div>
      </div>
    </div>
  );
}

function QueryWindow() {
  return (
    <div className="absolute left-[562px] top-[247px] w-[1295px] h-[680px] bg-white border border-[#d98a2b] shadow-[0_4px_22px_rgba(0,0,0,0.35)] flex flex-col font-[Roboto,sans-serif] text-[12px]">
      <div className="h-[29px] shrink-0 flex items-center relative">
        <svg width="18" height="18" viewBox="0 0 18 18" className="ml-[7px]">
          <rect x="6" y="1" width="11" height="16" fill="#fff" stroke="#217346" />
          <path d="M10 4h5M10 7h5M10 10h5M10 13h5" stroke="#217346" />
          <rect x="0" y="2" width="11" height="14" fill="#217346" />
          <path d="M2.5 5l6 8M8.5 5l-6 8" stroke="#fff" strokeWidth="1.4" />
        </svg>
        <div className="ml-[6px] w-[1px] h-[15px] bg-[#aaa]" />
        <svg width="18" height="18" viewBox="0 0 18 18" className="ml-[7px]">
          <circle cx="9" cy="9" r="8.5" fill="#ffc800" />
          <circle cx="6" cy="7" r="1.1" fill="#444" />
          <circle cx="12" cy="7" r="1.1" fill="#444" />
          <path d="M4.5 11c2 3 7 3 9 0" stroke="#444" fill="none" />
        </svg>
        <Caret color="#777" />
        <svg width="9" height="8" viewBox="0 0 9 8" className="ml-[5px]"><path d="M0 1h9M1 4h7L4.5 8z" stroke="#444" fill="#444" strokeWidth=".8" /></svg>
        <div className="ml-[5px] w-[1px] h-[15px] bg-[#aaa]" />
        <span className="ml-[6px] text-[13.4px] text-[#444]">Table3 - Query Editor</span>
        <div className="ml-auto flex items-center gap-[36px] pr-[16px]">
          <div className="w-[11px] h-[1px] bg-[#bbb]" />
          <div className="w-[11px] h-[12px] border border-[#333]" />
          <svg width="12" height="12" viewBox="0 0 12 12" stroke="#333"><path d="M.5.5l11 11M11.5.5l-11 11" /></svg>
        </div>
      </div>
      <div className="h-[24px] shrink-0 flex items-stretch border-b border-[#c8c8c8] text-[#444] whitespace-nowrap">
        <div className="w-[56px] bg-[#6b6b6b] text-white flex items-center justify-center">File</div>
        <div className="w-[58px] bg-[#f3f3f3] border-t border-x border-[#c8c8c8] mb-[-1px] flex items-center justify-center">Home</div>
        <div className="ml-[15px] w-[50px] flex items-center justify-center">Transform</div>
        <div className="ml-[30px] w-[64px] flex items-center justify-center">Add Column</div>
        <div className="ml-[29px] w-[25px] flex items-center justify-center">View</div>
        <div className="ml-auto flex items-center gap-[10px] pr-[2px]">
          <svg width="10" height="6" viewBox="0 0 10 6" fill="none" stroke="#999"><path d="M1 5.5l4-4 4 4" /></svg>
          <span className="w-[14px] h-[20px] rounded-[50%] bg-[#1c6fb8] text-white font-bold text-[13px] flex items-center justify-center">?</span>
        </div>
      </div>
      <QERibbon />
      <div className="flex-1 min-h-0 flex bg-[#e6e6e6] text-[11.8px]">
        <div className="w-[40px] shrink-0 border-r-2 border-[#bdbdbd] flex flex-col items-center">
          <svg width="9" height="14" viewBox="0 0 9 14" fill="none" stroke="#555" strokeWidth="1.6" className="mt-[16px]"><path d="M1.5 1l6 6-6 6" /></svg>
          <span className="mt-[12px] [writing-mode:vertical-rl] rotate-180 text-[12px] text-[#2f7a5b]">Queries</span>
        </div>
        <QueryGrid />
        <div className="w-[17px] shrink-0 mt-[36px] bg-[#f0f0f0] flex flex-col items-center">
          <div className="h-[34px] flex items-center justify-center">
            <svg width="12" height="8" viewBox="0 0 12 8" fill="none" stroke="#555" strokeWidth="2"><path d="M1 7l5-5 5 5" /></svg>
          </div>
          <div className="w-[15px] h-[212px] bg-[#c8c8c8]" />
          <div className="flex-1 flex items-end pb-[17px]">
            <svg width="12" height="8" viewBox="0 0 12 8" fill="none" stroke="#555" strokeWidth="2"><path d="M1 1l5 5 5-5" /></svg>
          </div>
        </div>
        <div className="w-[4px]" />
        <QuerySettings />
      </div>
      <div className="h-[22px] shrink-0 bg-[#f0f0f0] border-t border-[#b0b0b0] flex items-center justify-between px-[5px] text-[10.5px] text-[#444]">
        <span>7 COLUMNS, 43 ROWS</span>
        <span>PREVIEW DOWNLOADED AT 9:32 AM</span>
      </div>
    </div>
  );
}

export default function App() {
  return (
    <div className="relative w-[1889px] h-[958px] overflow-hidden bg-white flex flex-col font-[Roboto,sans-serif]">
      <TabBar />
      <Ribbon />
      <FormulaBar />
      <Sheet />
      <QueryWindow />
      {/* red annotation arrow */}
      <svg className="absolute left-0 top-0 pointer-events-none drop-shadow-[2px_3px_2px_rgba(0,0,0,0.45)]" width="300" height="260" viewBox="0 0 300 260">
        <path d="M203 136 L249 229" stroke="#e8000f" strokeWidth="12" strokeLinecap="round" />
        <path d="M196 121 193 140 216 132z" fill="#e8000f" stroke="#e8000f" strokeLinejoin="round" strokeWidth="2" />
      </svg>
    </div>
  );
}
